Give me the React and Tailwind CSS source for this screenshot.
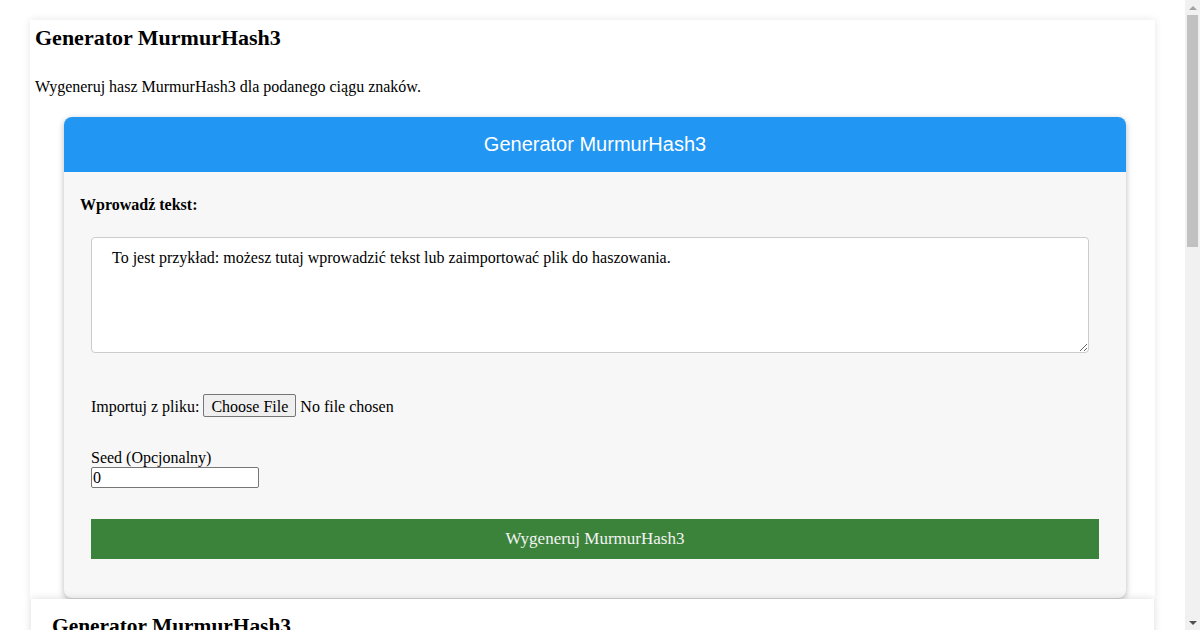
import React from 'react'

const serif = "font-['Liberation_Serif','Times_New_Roman',serif]"

function Scrollbar() {
  return (
    <div className="w-[15px] h-full bg-[#f1f1f1] flex flex-col items-center">
      <div className="h-[15px] w-full flex items-center justify-center">
        <div className="w-0 h-0 border-l-[4px] border-r-[4px] border-b-[4px] border-l-transparent border-r-transparent border-b-[#a3a3a3]" />
      </div>
      <div className="w-[11px] h-[232px] bg-[#c1c1c1]" />
      <div className="flex-1" />
      <div className="h-[15px] w-full flex items-center justify-center">
        <div className="w-0 h-0 border-l-[4px] border-r-[4px] border-t-[4px] border-l-transparent border-r-transparent border-t-[#505050]" />
      </div>
    </div>
  )
}

function HashCard() {
  return (
    <div className="ml-[34px] w-[1062px] rounded-lg overflow-hidden bg-[#f7f7f7] shadow-[0_2px_6px_rgba(0,0,0,0.28)]">
      <div className="h-[55px] bg-[#2196f3] flex items-center justify-center">
        <h2 className="text-white text-[20px] font-['Liberation_Sans',Arial,sans-serif] leading-[23px]">Generator MurmurHash3</h2>
      </div>
      <div className="pt-[24px] pl-[16px] pb-[39px]">
        <label className="block font-bold text-[16px] leading-[18px]">Wprowadź tekst:</label>
        <div className="ml-[11px] mt-[23px]">
          <textarea
            className="block w-[998px] h-[116px] bg-white border border-[#cccccc] rounded-[4px] px-[20px] py-[11px] text-[16px] leading-[18px] resize-y outline-none"
            defaultValue="To jest przykład: możesz tutaj wprowadzić tekst lub zaimportować plik do haszowania."
          />
          <div className="mt-[42px] flex items-center h-[23px] text-[16px]">
            <span className="mr-[4px]">Importuj z pliku:</span>
            <input
              type="file"
              className="text-[16px] file:bg-[#efefef] file:border file:border-solid file:border-[#767676] file:rounded-[2px] file:px-[7px] file:h-[23px] file:mr-[4px] file:text-black"
            />
          </div>
          <label className="block mt-[31px] text-[16px] leading-[18px]">Seed (Opcjonalny)</label>
          <input
            type="number"
            defaultValue="0"
            className="block w-[168px] h-[21px] bg-white border border-[#767676] rounded-[2px] px-[1px] text-[16px] leading-[18px] outline-none [appearance:textfield]"
          />
          <button className="mt-[31px] w-[1008px] h-[40px] bg-[#3b833a] text-[#f3f3f3] text-[17px] flex items-center justify-center">
            Wygeneruj MurmurHash3
          </button>
        </div>
      </div>
    </div>
  )
}

export default function App() {
  return (
    <div className={`flex h-[630px] overflow-hidden bg-white text-black ${serif}`}>
      <div className="flex-1 min-w-0 pt-[20px]">
        <div className="ml-[30px] w-[1125px] bg-white pt-[5px] pb-px shadow-[0_0_8px_rgba(0,0,0,0.1)]">
          <h1 className="pl-[5px] text-[22px] leading-[25px] font-bold">Generator MurmurHash3</h1>
          <p className="pl-[5px] mt-[28px] text-[16px] leading-[18px]">Wygeneruj hasz MurmurHash3 dla podanego ciągu znaków.</p>
          <div className="mt-[21px]">
            <HashCard />
          </div>
        </div>
        <div className="ml-[31px] w-[1123px] h-[200px] bg-white pt-[15px] pl-[21px] shadow-[0_0_8px_rgba(0,0,0,0.14)]">
          <h2 className="text-[21.4px] leading-[24px] font-bold">Generator MurmurHash3</h2>
        </div>
      </div>
      <Scrollbar />
    </div>
  )
}
